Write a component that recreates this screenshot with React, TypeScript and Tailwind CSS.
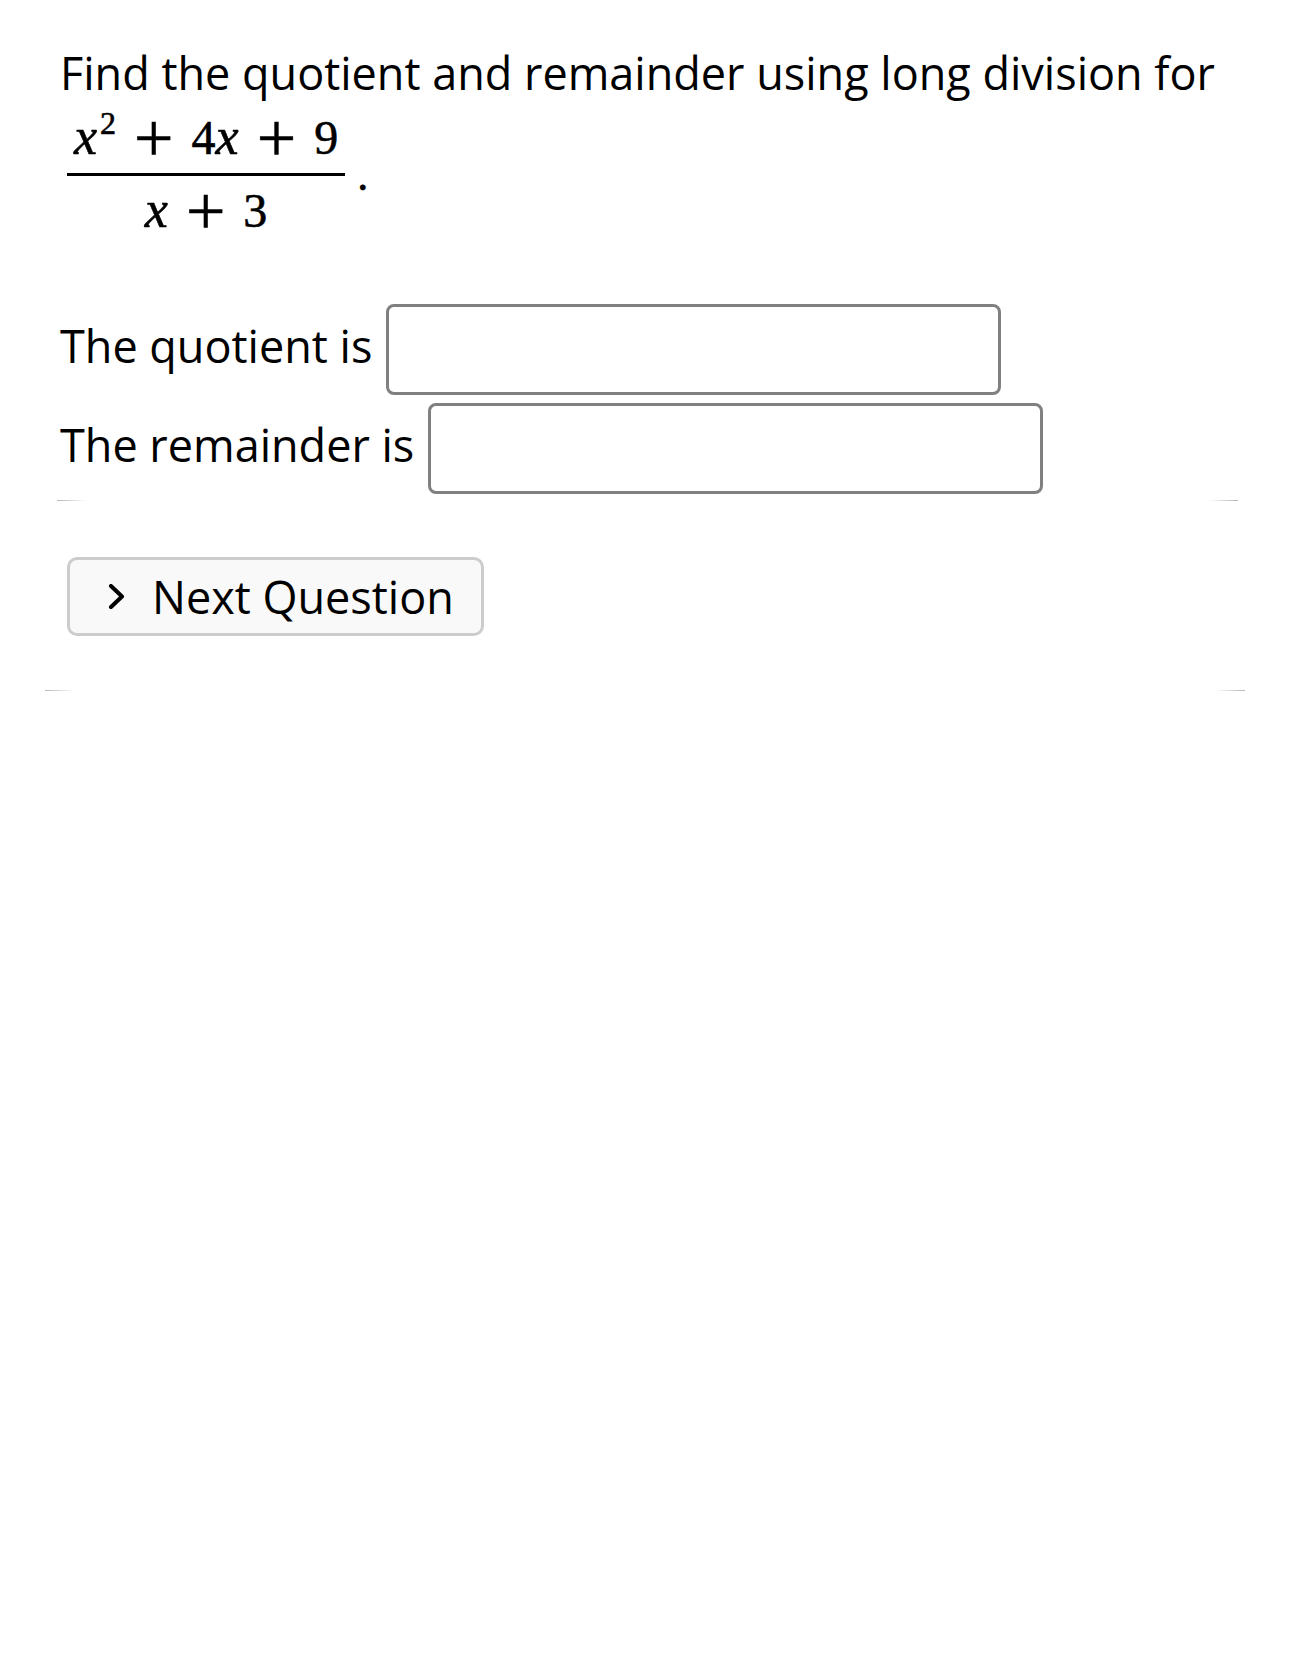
import * as React from "react";

function MathX() {
  return <span className="text-[52px] italic leading-[0]">x</span>;
}

function Plus() {
  return <span className="relative top-[8px] mx-[18px] text-[70px] leading-[0]">+</span>;
}

function Fraction() {
  return (
    <div className="mt-[4px] ml-[7px] flex font-['Liberation_Serif',serif] text-[48px] text-black [-webkit-text-stroke:0.6px_black]">
      <div className="inline-flex flex-col items-stretch">
        <div className="px-[7px] text-center leading-[60px] whitespace-nowrap">
          <MathX />
          <sup className="-top-[20px] ml-[3px] text-[32px]">2</sup>
          <Plus />4<MathX />
          <Plus />9
        </div>
        <div className="mt-[5px] h-[3px] bg-black" />
        <div className="mt-[5px] text-center leading-[60px] whitespace-nowrap">
          <MathX />
          <Plus />3
        </div>
      </div>
      <span className="mt-[46px] ml-[12px] self-start text-[44px] leading-none">.</span>
    </div>
  );
}

function AnswerRow({ label, width }: { label: string; width: string }) {
  return (
    <div className="flex items-center">
      <span className="mb-[8px] leading-[63px] whitespace-nowrap">{label}</span>
      <div className={`ml-[14px] h-[91px] ${width} rounded-[8px] border-[3px] border-[#808080] bg-white`} />
    </div>
  );
}

export default function App() {
  return (
    <div className="min-h-[1675px] w-full bg-white font-['Open_Sans',sans-serif] text-black">
      <div className="ml-[45px] w-[1200px] pb-[55px] bg-[linear-gradient(to_right,#b5b5b5,transparent_30px,transparent_1170px,#b5b5b5)] bg-[length:100%_1px] bg-bottom bg-no-repeat">
        <div className="ml-[12px] w-[1181px] pb-[7px] pt-[41px] bg-[linear-gradient(to_right,#b5b5b5,transparent_30px,transparent_1151px,#b5b5b5)] bg-[length:100%_1px] bg-bottom bg-no-repeat">
          <div className="pl-[3px]">
            <p className="text-[45px] leading-[63px]">
              Find the quotient and remainder using long division for
            </p>
            <Fraction />
            <div className="mt-[63px] flex flex-col gap-[8px] text-[45px]">
              <AnswerRow label="The quotient is" width="w-[615px]" />
              <AnswerRow label="The remainder is" width="w-[615px]" />
            </div>
          </div>
        </div>
        <div className="mt-[56px] ml-[22px]">
          <button className="flex h-[79px] items-center gap-[26px] rounded-[10px] border-[3px] border-[#cccccc] bg-[#f9f9f9] pl-[38px] pr-[27px] text-[45px] leading-none text-black">
            <svg width="18" height="25" viewBox="0 0 18 25" fill="none">
              <path d="M3 2 L14 12.5 L3 23" stroke="#000" strokeWidth="4" strokeLinecap="round" strokeLinejoin="round" />
            </svg>
            <span>Next Question</span>
          </button>
        </div>
      </div>
    </div>
  );
}
